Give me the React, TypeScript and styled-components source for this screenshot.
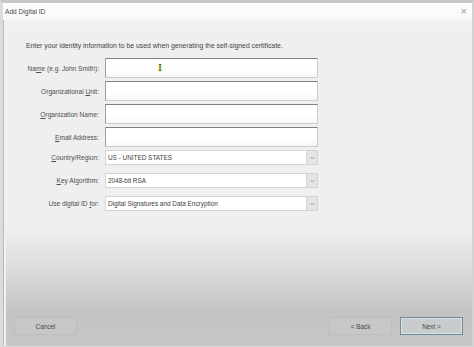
import React from 'react'
import styled, { createGlobalStyle } from 'styled-components'

const GlobalStyle = createGlobalStyle`
  html, body {
    margin: 0;
    padding: 0;
    width: 474px;
    height: 347px;
    overflow: hidden;
    background: #c8c8c8;
  }
  #root {
    height: 347px;
  }
`

const Window = styled.div`
  box-sizing: border-box;
  width: 474px;
  height: 347px;
  display: flex;
  flex-direction: column;
  border-top: 3px solid #c6c6c6;
  border-left: 3px solid #dcdcdc;
  border-right: 2px solid #d2d2d2;
  box-shadow: inset 1px 0 0 #b8b8b8, inset 3px 0 0 #f2f2f2;
  font-family: 'Liberation Sans', Arial, sans-serif;
  color: #3a3a3a;
  background: linear-gradient(180deg, #f7f7f7 0px, #efefef 30px, #efefef 225px, #d9d9d9 270px, #c3c3c3 310px, #c6c6c6 347px);
`

const TitleBar = styled.div`
  height: 17px;
  display: flex;
  align-items: center;
  justify-content: space-between;
  padding: 0 5px 0 2px;
  background: linear-gradient(180deg, #ffffff, #f8f8f8);
  font-size: 6.6px;
  color: #4a4a4a;
`

const Close = styled.span`
  font-size: 11px;
  color: #9a9a9a;
  line-height: 1;
`

const Body = styled.div`
  flex: 1;
  display: flex;
  flex-direction: column;
  padding: 22px 0 0 23px;
`

const Intro = styled.div`
  font-size: 6.85px;
  color: #444;
  margin-bottom: 9px;
`

const Form = styled.div`
  display: grid;
  grid-template-columns: 73px 213px;
  column-gap: 6px;
  align-items: center;
`

const Label = styled.label<{ $gap: number }>`
  font-size: 6.6px;
  color: #4e4e4e;
  text-align: right;
  margin-bottom: ${p => p.$gap}px;
  white-space: nowrap;
  u { text-decoration-thickness: 0.5px; text-underline-offset: 1px; }
`

const TextField = styled.div<{ $gap: number }>`
  box-sizing: border-box;
  height: 20px;
  margin-bottom: ${p => p.$gap}px;
  background: linear-gradient(180deg, #ffffff 60%, #f6f6f6);
  border: 1px solid #cdcdcd;
  border-top: 1px solid #808080;
  border-left: 1px solid #9e9e9e;
  display: flex;
  align-items: center;
  position: relative;
`

const Cursor = styled.span`
  position: absolute;
  left: 52px;
  top: 3px;
  font-family: 'DejaVu Serif', serif;
  font-size: 10px;
  color: #3a3a3a;
  text-shadow: 0 0 3px #e4f04a, 0 0 4px #e8f255;
`

const Select = styled.div<{ $gap: number }>`
  box-sizing: border-box;
  height: 15px;
  margin-bottom: ${p => p.$gap}px;
  display: flex;
  border: 1px solid #d4d4d4;
  background: #e8e8e8;
`

const SelectValue = styled.div`
  flex: 1;
  background: #ffffff;
  font-size: 6.4px;
  color: #404040;
  display: flex;
  align-items: center;
  padding-left: 2px;
`

const Arrow = styled.div`
  width: 10px;
  display: flex;
  align-items: center;
  justify-content: center;
  background: #e4e4e4;
  border-left: 1px solid #d6d6d6;
`

const Footer = styled.div`
  display: flex;
  align-items: center;
  padding: 0 9px 11px 11px;
  margin-top: auto;
  gap: 8px;
  border-bottom: 1px solid #d8d8d8;
`

const Button = styled.button<{ $primary?: boolean }>`
  box-sizing: border-box;
  width: 63px;
  height: 18px;
  font-family: 'Liberation Sans', Arial, sans-serif;
  font-size: 6.4px;
  color: #4a4a4a;
  background: ${p => (p.$primary ? '#c9cccd' : '#c7c7c7')};
  border: 1px solid ${p => (p.$primary ? '#6f8b9a' : '#bdbdbd')};
  box-shadow: ${p => (p.$primary ? 'inset 0 0 0 1px #d8e2e8' : 'none')};
  padding: 0;
`

const Spacer = styled.div`
  flex: 1;
`

const ChevronDown = () => (
  <svg width="5" height="4" viewBox="0 0 5 4">
    <path d="M0.5 1 L2.5 3 L4.5 1" stroke="#8a8a8a" strokeWidth="0.8" fill="none" />
  </svg>
)

const fields: { label: React.ReactNode; gap: number }[] = [
  { label: <>Na<u>m</u>e (e.g. John Smith):</>, gap: 3 },
  { label: <>Organizational <u>U</u>nit:</>, gap: 3 },
  { label: <><u>O</u>rganization Name:</>, gap: 3 },
  { label: <><u>E</u>mail Address:</>, gap: 3 },
]

const selects: { label: React.ReactNode; value: string; gap: number }[] = [
  { label: <><u>C</u>ountry/Region:</>, value: 'US - UNITED STATES', gap: 8 },
  { label: <><u>K</u>ey Algorithm:</>, value: '2048-bit RSA', gap: 8 },
  { label: <>Use digital ID <u>f</u>or:</>, value: 'Digital Signatures and Data Encryption', gap: 0 },
]

export default function App() {
  return (
    <>
      <GlobalStyle />
      <Window>
        <TitleBar>
          <span>Add Digital ID</span>
          <Close>×</Close>
        </TitleBar>
        <Body>
          <Intro>Enter your identity information to be used when generating the self-signed certificate.</Intro>
          <Form>
            {fields.map((f, i) => (
              <React.Fragment key={i}>
                <Label $gap={f.gap}>{f.label}</Label>
                <TextField $gap={f.gap}>{i === 0 && <Cursor>I</Cursor>}</TextField>
              </React.Fragment>
            ))}
            {selects.map((s, i) => (
              <React.Fragment key={i}>
                <Label $gap={s.gap}>{s.label}</Label>
                <Select $gap={s.gap}>
                  <SelectValue>{s.value}</SelectValue>
                  <Arrow><ChevronDown /></Arrow>
                </Select>
              </React.Fragment>
            ))}
          </Form>
        </Body>
        <Footer>
          <Button>Cancel</Button>
          <Spacer />
          <Button>&lt; Back</Button>
          <Button $primary>Next &gt;</Button>
        </Footer>
      </Window>
    </>
  )
}
